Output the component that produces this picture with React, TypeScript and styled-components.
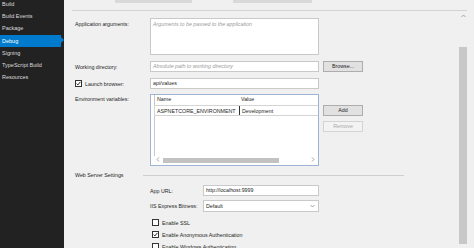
import React from "react";
import styled, { createGlobalStyle } from "styled-components";

const Global = createGlobalStyle`
  html, body { margin: 0; padding: 0; background: #f0f0f0; }
  body { font-family: "Liberation Sans", Arial, sans-serif; font-size: 5.3px; color: #1e1e1e; }
  * { box-sizing: border-box; }
`;

const Shell = styled.div`
  display: flex;
  width: 474px;
  height: 248px;
  overflow: hidden;
`;

const Sidebar = styled.nav`
  width: 64px;
  flex: none;
  background: #222223;
  display: flex;
  flex-direction: column;
  padding-top: 0;
  margin-top: -2px;
`;

const NavItem = styled.div<{ $active?: boolean }>`
  position: relative;
  height: 12.2px;
  line-height: 12.2px;
  padding-left: 2px;
  font-size: 5.5px;
  color: ${(p) => (p.$active ? "#ffffff" : "#dcdcdc")};
  background: ${(p) => (p.$active ? "#007acc" : "transparent")};
  width: ${(p) => (p.$active ? "61px" : "64px")};
  white-space: nowrap;
  ${(p) =>
    p.$active &&
    `&::after {
      content: "";
      position: absolute;
      right: -3px;
      top: 2.6px;
      border-top: 3.5px solid transparent;
      border-bottom: 3.5px solid transparent;
      border-left: 3px solid #007acc;
    }`}
`;

const Main = styled.main`
  flex: 1;
  display: flex;
  flex-direction: column;
  min-width: 0;
`;

const TopStrip = styled.div`
  height: 10px;
  display: flex;
  padding-left: 51px;
  gap: 41px;
`;

const TopBlock = styled.div<{ $w: number }>`
  width: ${(p) => p.$w}px;
  height: 3px;
  background: #d9d9d9;
`;

const TopRule = styled.div`
  height: 1px;
  margin: 0 7px 0 8px;
  background: #d2d2d2;
`;

const Body = styled.div`
  flex: 1;
  display: flex;
  min-height: 0;
`;

const Content = styled.div`
  flex: 1;
  padding-left: 11px;
  display: flex;
  flex-direction: column;
`;

const FieldRule = styled.div`
  margin: 2px 0 0 75px;
  width: 169px;
  height: 1px;
  background: #d0d0d0;
`;

const FormRow = styled.div<{ $mt: number }>`
  display: grid;
  grid-template-columns: 71px 169px 40px;
  column-gap: 4px;
  margin-top: ${(p) => p.$mt}px;
  align-items: center;
`;

const Label = styled.div<{ $top?: number }>`
  white-space: nowrap;
  ${(p) => (p.$top !== undefined ? `align-self: start; padding-top: ${p.$top}px;` : "")}
`;

const TextArea = styled.div`
  height: 37px;
  background: #fff;
  border: 1px solid #c9c9c9;
  padding: 2px 2px;
  color: #9a9a9a;
  font-style: italic;
`;

const Input = styled.div<{ $placeholder?: boolean }>`
  height: 11px;
  line-height: 9px;
  background: #fff;
  border: 1px solid #c9c9c9;
  padding: 0 2px;
  white-space: nowrap;
  color: ${(p) => (p.$placeholder ? "#9a9a9a" : "#1e1e1e")};
  font-style: ${(p) => (p.$placeholder ? "italic" : "normal")};
`;

const Button = styled.div<{ $disabled?: boolean; $mt?: number }>`
  height: 11px;
  line-height: 9px;
  text-align: center;
  background: ${(p) => (p.$disabled ? "#f3f3f3" : "#e1e1e1")};
  border: 1px solid ${(p) => (p.$disabled ? "#d4d4d4" : "#adadad")};
  color: ${(p) => (p.$disabled ? "#a8a8a8" : "#1e1e1e")};
  margin-top: ${(p) => p.$mt ?? 0}px;
`;

const ButtonStack = styled.div`
  align-self: start;
  display: flex;
  flex-direction: column;
`;

const CheckLabel = styled.label`
  display: flex;
  align-items: center;
  gap: 3px;
  white-space: nowrap;
`;

const Box = styled.span`
  width: 7px;
  height: 7px;
  flex: none;
  background: #fff;
  border: 1px solid #333;
  display: inline-flex;
  align-items: center;
  justify-content: center;
`;

const Check = ({ on }: { on?: boolean }) => (
  <Box>
    {on && (
      <svg width="5" height="5" viewBox="0 0 5 5">
        <polyline points="0.6,2.6 1.9,3.9 4.4,0.9" fill="none" stroke="#222" strokeWidth="1" />
      </svg>
    )}
  </Box>
);

const Grid = styled.div`
  height: 72px;
  background: #fff;
  border: 1px solid #9db4d4;
  display: flex;
  flex-direction: column;
  padding-left: 3px;
`;

const GridHead = styled.div`
  display: grid;
  grid-template-columns: 84px 1fr;
  height: 10px;
  line-height: 9px;
  border-left: 1px solid #c9c9c9;
`;

const GridRow = styled.div`
  display: grid;
  grid-template-columns: 84px 1fr;
  height: 11px;
  line-height: 10px;
  border: 1px solid #d4d4d4;
  border-right: none;
`;

const Cell = styled.div<{ $sep?: boolean }>`
  padding-left: 2px;
  white-space: nowrap;
  overflow: hidden;
  ${(p) => (p.$sep ? "border-left: 1px solid #333;" : "")}
`;

const GridFill = styled.div`
  flex: 1;
  border-left: 1px solid #c9c9c9;
`;

const HScroll = styled.div`
  height: 8px;
  margin-bottom: 1px;
  display: flex;
  align-items: center;
  color: #a0a0a0;
  font-size: 5px;
`;

const HArrow = styled.span`
  width: 9px;
  text-align: center;
`;

const HThumb = styled.div`
  width: 116px;
  height: 5px;
  background: #c2c2c2;
`;

const SectionHeader = styled.div`
  display: grid;
  grid-template-columns: 68px 261px;
  align-items: center;
  margin-top: 6px;
  height: 8px;
`;

const SectionRule = styled.div`
  height: 1px;
  background: #cfcfcf;
`;

const WebRow = styled.div<{ $mt: number }>`
  display: grid;
  grid-template-columns: 53px 116px;
  padding-left: 75px;
  align-items: center;
  margin-top: ${(p) => p.$mt}px;
`;

const Select = styled.div`
  height: 12px;
  background: #fff;
  border: 1px solid #c9c9c9;
  display: flex;
  align-items: center;
  justify-content: space-between;
  padding: 0 3px 0 2px;
  line-height: 10px;
`;

const CheckRow = styled.div<{ $mt: number }>`
  padding-left: 77px;
  margin-top: ${(p) => p.$mt}px;
  height: 7px;
  display: flex;
  align-items: center;
`;

const VScroll = styled.div`
  width: 16px;
  margin-right: 3px;
  display: flex;
  flex-direction: column;
  align-items: center;
  padding-top: 3px;
`;

const VThumb = styled.div`
  width: 8px;
  height: 197px;
  margin-top: 28px;
  background: #c8c8c8;
`;

const Chevron = ({ dir }: { dir: "up" | "down" | "left" | "right" }) => {
  const pts =
    dir === "up"
      ? "0.5,3 2.5,1 4.5,3"
      : dir === "down"
      ? "0.5,1 2.5,3 4.5,1"
      : dir === "left"
      ? "3,0.5 1,2.5 3,4.5"
      : "1,0.5 3,2.5 1,4.5";
  return (
    <svg width="5" height="5" viewBox="0 0 5 5">
      <polyline points={pts} fill="none" stroke="#9a9a9a" strokeWidth="0.9" />
    </svg>
  );
};

const nav = ["Build", "Build Events", "Package", "Debug", "Signing", "TypeScript Build", "Resources"];

export default function App() {
  return (
    <>
      <Global />
      <Shell>
        <Sidebar>
          {nav.map((n) => (
            <NavItem key={n} $active={n === "Debug"}>
              {n}
            </NavItem>
          ))}
        </Sidebar>
        <Main>
          <TopStrip>
            <TopBlock $w={77} />
            <TopBlock $w={79} />
          </TopStrip>
          <TopRule />
          <Body>
            <Content>
              <FieldRule />
              <FormRow $mt={5}>
                <Label $top={3}>Application arguments:</Label>
                <TextArea>Arguments to be passed to the application</TextArea>
              </FormRow>
              <FormRow $mt={6}>
                <Label>Working directory:</Label>
                <Input $placeholder>Absolute path to working directory</Input>
                <Button>Browse...</Button>
              </FormRow>
              <FormRow $mt={6}>
                <CheckLabel>
                  <Check on />
                  Launch browser:
                </CheckLabel>
                <Input>api/values</Input>
              </FormRow>
              <FormRow $mt={5}>
                <Label $top={2}>Environment variables:</Label>
                <Grid>
                  <GridHead>
                    <Cell>Name</Cell>
                    <Cell>Value</Cell>
                  </GridHead>
                  <GridRow>
                    <Cell>ASPNETCORE_ENVIRONMENT</Cell>
                    <Cell $sep>Development</Cell>
                  </GridRow>
                  <GridFill />
                  <HScroll>
                    <HArrow>
                      <Chevron dir="left" />
                    </HArrow>
                    <HThumb />
                    <span style={{ flex: 1 }} />
                    <HArrow>
                      <Chevron dir="right" />
                    </HArrow>
                  </HScroll>
                </Grid>
                <ButtonStack>
                  <Button $mt={11}>Add</Button>
                  <Button $mt={5} $disabled>
                    Remove
                  </Button>
                </ButtonStack>
              </FormRow>
              <SectionHeader>
                <Label>Web Server Settings</Label>
                <SectionRule />
              </SectionHeader>
              <WebRow $mt={7}>
                <Label>App URL:</Label>
                <Input>http://localhost:9999</Input>
              </WebRow>
              <WebRow $mt={4}>
                <Label>IIS Express Bitness:</Label>
                <Select>
                  <span>Default</span>
                  <Chevron dir="down" />
                </Select>
              </WebRow>
              <CheckRow $mt={7}>
                <CheckLabel>
                  <Check />
                  Enable SSL
                </CheckLabel>
              </CheckRow>
              <CheckRow $mt={5}>
                <CheckLabel>
                  <Check on />
                  Enable Anonymous Authentication
                </CheckLabel>
              </CheckRow>
              <CheckRow $mt={5}>
                <CheckLabel>
                  <Check />
                  Enable Windows Authentication
                </CheckLabel>
              </CheckRow>
            </Content>
            <VScroll>
              <Chevron dir="up" />
              <VThumb />
            </VScroll>
          </Body>
        </Main>
      </Shell>
    </>
  );
}
